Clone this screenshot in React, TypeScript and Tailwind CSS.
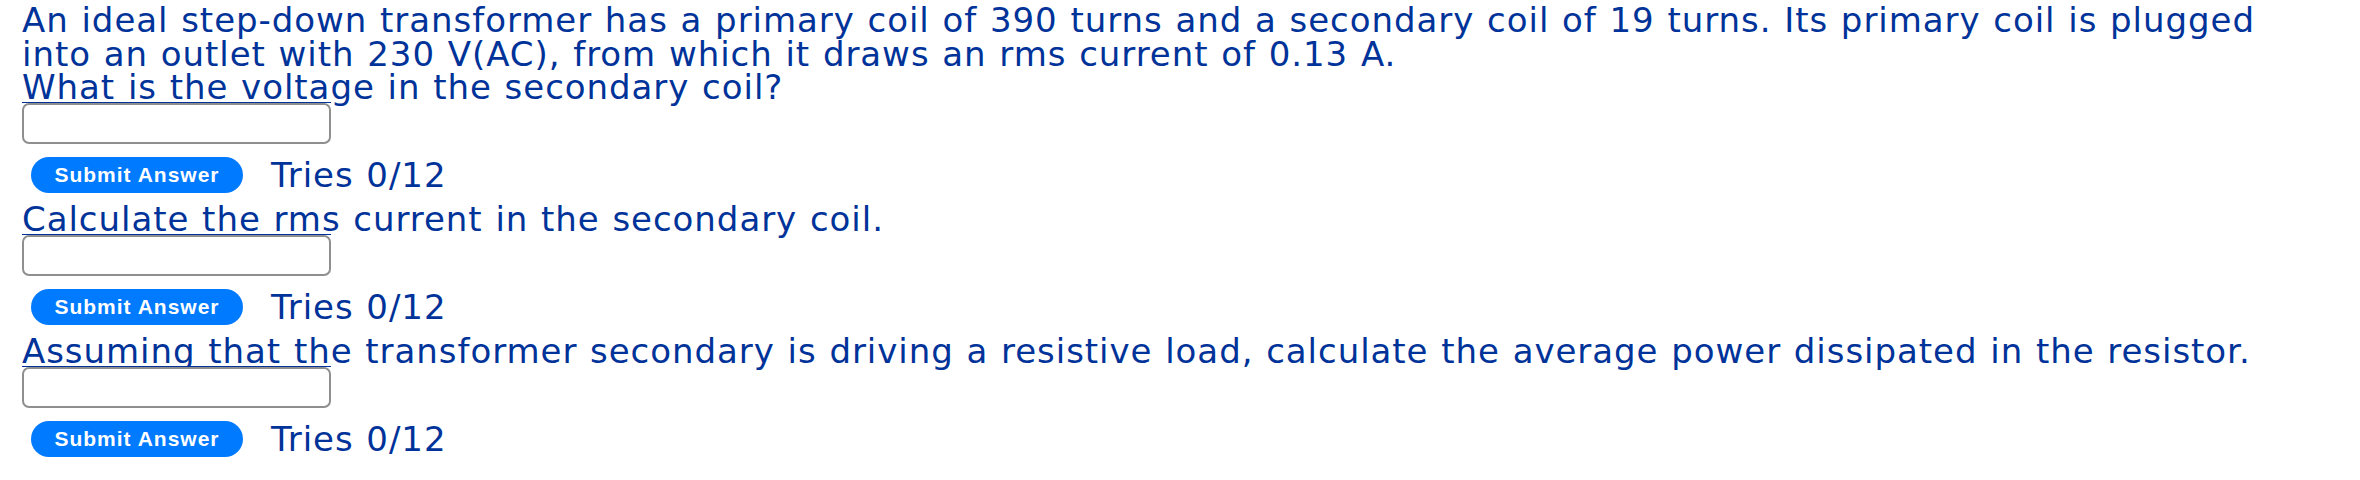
import React from "react";

const textFont = {
  fontFamily: '"DejaVu Sans", Verdana, sans-serif',
  letterSpacing: "0.95px",
  wordSpacing: "1px",
};

function AnswerBlock() {
  return (
    <div className="flex flex-col">
      <div className="relative z-10 mt-[-2.5px] h-[42px] w-[309px] border-t border-[#003399] bg-white">
        <input
          type="text"
          className="box-border block h-[41px] w-full rounded-[7px] border-2 border-[#8f8f8f] bg-white outline-none"
        />
      </div>
      <div className="mt-[12.5px] flex h-[36px] items-center">
        <button
          className="ml-[9px] flex h-[36px] w-[212px] items-center justify-center rounded-full bg-[#007aff] text-[21px] font-bold tracking-[1px] text-white"
          style={{ fontFamily: '"Liberation Sans", Arial, sans-serif' }}
        >
          Submit Answer
        </button>
        <span
          className="ml-[28px] text-[34px] leading-[36px] text-[#003399]"
          style={textFont}
        >
          Tries 0/12
        </span>
      </div>
    </div>
  );
}

export default function App() {
  return (
    <div className="h-[480px] w-[2360px] bg-white pl-[22px] pt-[4px]" style={textFont}>
      <div className="text-[34px] leading-[33.5px] text-[#003399]">
        <div>
          An ideal step-down transformer has a primary coil of 390 turns and a secondary coil of 19 turns. Its primary coil is plugged
        </div>
        <div>into an outlet with 230 V(AC), from which it draws an rms current of 0.13 A.</div>
        <div>What is the voltage in the secondary coil?</div>
      </div>
      <AnswerBlock />
      <div className="mt-[10.5px] text-[34px] leading-[33.5px] text-[#003399]">
        Calculate the rms current in the secondary coil.
      </div>
      <AnswerBlock />
      <div className="mt-[10.5px] text-[34px] leading-[33.5px] text-[#003399]">
        Assuming that the transformer secondary is driving a resistive load, calculate the average power dissipated in the resistor.
      </div>
      <AnswerBlock />
    </div>
  );
}
